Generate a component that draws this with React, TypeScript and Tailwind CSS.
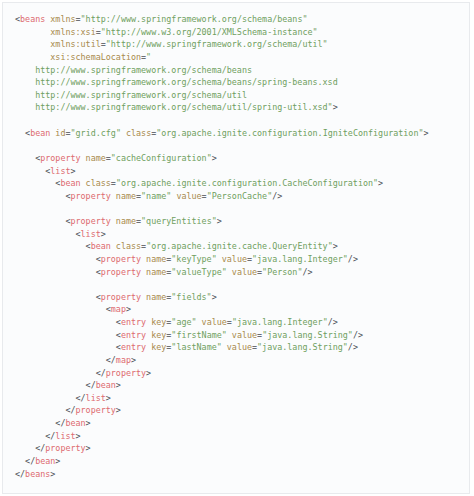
import React from "react";

type Tok = [string, string];
const T = "t", A = "a", V = "v", P = "p";

const lines: Tok[][] = [
  [[P, "<"], [T, "beans"], [P, " "], [A, "xmlns"], [P, "="], [V, '"http://www.springframework.org/schema/beans"']],
  [[P, "       "], [A, "xmlns:xsi"], [P, "="], [V, '"http://www.w3.org/2001/XMLSchema-instance"']],
  [[P, "       "], [A, "xmlns:util"], [P, "="], [V, '"http://www.springframework.org/schema/util"']],
  [[P, "       "], [A, "xsi:schemaLocation"], [P, "="], [V, '"']],
  [[V, "    http://www.springframework.org/schema/beans"]],
  [[V, "    http://www.springframework.org/schema/beans/spring-beans.xsd"]],
  [[V, "    http://www.springframework.org/schema/util"]],
  [[V, '    http://www.springframework.org/schema/util/spring-util.xsd"'], [P, ">"]],
  [],
  [[P, "  <"], [T, "bean"], [P, " "], [A, "id"], [P, "="], [V, '"grid.cfg"'], [P, " "], [A, "class"], [P, "="], [V, '"org.apache.ignite.configuration.IgniteConfiguration"'], [P, ">"]],
  [],
  [[P, "    <"], [T, "property"], [P, " "], [A, "name"], [P, "="], [V, '"cacheConfiguration"'], [P, ">"]],
  [[P, "      <"], [T, "list"], [P, ">"]],
  [[P, "        <"], [T, "bean"], [P, " "], [A, "class"], [P, "="], [V, '"org.apache.ignite.configuration.CacheConfiguration"'], [P, ">"]],
  [[P, "          <"], [T, "property"], [P, " "], [A, "name"], [P, "="], [V, '"name"'], [P, " "], [A, "value"], [P, "="], [V, '"PersonCache"'], [P, "/>"]],
  [],
  [[P, "          <"], [T, "property"], [P, " "], [A, "name"], [P, "="], [V, '"queryEntities"'], [P, ">"]],
  [[P, "            <"], [T, "list"], [P, ">"]],
  [[P, "              <"], [T, "bean"], [P, " "], [A, "class"], [P, "="], [V, '"org.apache.ignite.cache.QueryEntity"'], [P, ">"]],
  [[P, "                <"], [T, "property"], [P, " "], [A, "name"], [P, "="], [V, '"keyType"'], [P, " "], [A, "value"], [P, "="], [V, '"java.lang.Integer"'], [P, "/>"]],
  [[P, "                <"], [T, "property"], [P, " "], [A, "name"], [P, "="], [V, '"valueType"'], [P, " "], [A, "value"], [P, "="], [V, '"Person"'], [P, "/>"]],
  [],
  [[P, "                <"], [T, "property"], [P, " "], [A, "name"], [P, "="], [V, '"fields"'], [P, ">"]],
  [[P, "                  <"], [T, "map"], [P, ">"]],
  [[P, "                    <"], [T, "entry"], [P, " "], [A, "key"], [P, "="], [V, '"age"'], [P, " "], [A, "value"], [P, "="], [V, '"java.lang.Integer"'], [P, "/>"]],
  [[P, "                    <"], [T, "entry"], [P, " "], [A, "key"], [P, "="], [V, '"firstName"'], [P, " "], [A, "value"], [P, "="], [V, '"java.lang.String"'], [P, "/>"]],
  [[P, "                    <"], [T, "entry"], [P, " "], [A, "key"], [P, "="], [V, '"lastName"'], [P, " "], [A, "value"], [P, "="], [V, '"java.lang.String"'], [P, "/>"]],
  [[P, "                  </"], [T, "map"], [P, ">"]],
  [[P, "                </"], [T, "property"], [P, ">"]],
  [[P, "              </"], [T, "bean"], [P, ">"]],
  [[P, "            </"], [T, "list"], [P, ">"]],
  [[P, "          </"], [T, "property"], [P, ">"]],
  [[P, "        </"], [T, "bean"], [P, ">"]],
  [[P, "      </"], [T, "list"], [P, ">"]],
  [[P, "    </"], [T, "property"], [P, ">"]],
  [[P, "  </"], [T, "bean"], [P, ">"]],
  [[P, "</"], [T, "beans"], [P, ">"]],
];

const cls: Record<string, string> = {
  t: "text-[#dd6a6f]",
  a: "text-[#a88a4c]",
  v: "text-[#6f9f60]",
  p: "text-[#4a4f55]",
};

export default function App() {
  return (
    <div className="w-[474px] h-[496px] bg-white p-[2px]">
      <div className="w-[468px] h-[492px] bg-[#fbfcfd] border border-[#e8eaed] pl-[12px] pt-[10px]">
        <pre className="font-['DejaVu_Sans_Mono',monospace] text-[8.4px] leading-[12.64px] m-0">
          {lines.map((ln, i) => (
            <div key={i} className="h-[12.64px] whitespace-pre">
              {ln.map(([k, s], j) => (
                <span key={j} className={cls[k]}>{s}</span>
              ))}
            </div>
          ))}
        </pre>
      </div>
    </div>
  );
}
